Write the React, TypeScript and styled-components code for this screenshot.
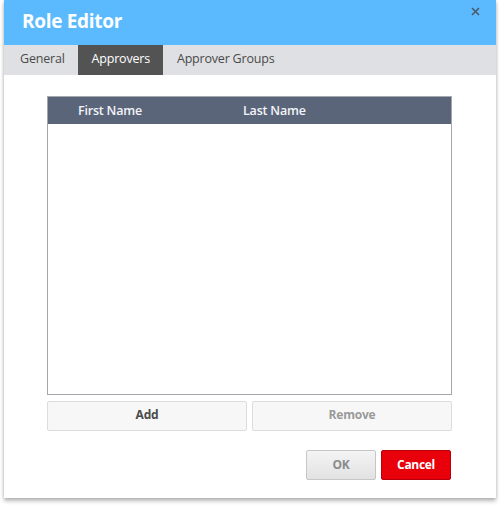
import React from "react";
import styled, { createGlobalStyle } from "styled-components";

const Global = createGlobalStyle`
  html, body { margin: 0; padding: 0; background: #ffffff; }
  body { font-family: "Open Sans", "Noto Sans", sans-serif; }
`;

const Page = styled.div`
  padding: 0 4px 8px;
  min-height: 506px;
  box-sizing: border-box;
`;

const Dialog = styled.div`
  position: relative;
  width: 492px;
  height: 498px;
  background: #ffffff;
  box-shadow: 0 3px 4px rgba(0, 0, 0, 0.28), 0 0 3px rgba(0, 0, 0, 0.12);
  display: flex;
  flex-direction: column;
`;

const Header = styled.div`
  height: 45px;
  background: #5bbafe;
  display: flex;
  align-items: center;
  padding: 0 0 4px 18px;
  box-sizing: border-box;
`;

const Title = styled.h1`
  margin: 0;
  font-size: 19px;
  font-weight: 700;
  color: #ffffff;
  letter-spacing: -0.3px;
`;

const Close = styled.button`
  position: absolute;
  top: 4px;
  right: 14px;
  width: 14px;
  height: 14px;
  padding: 0;
  border: none;
  background: transparent;
  display: flex;
  align-items: center;
  justify-content: center;
`;

const TabBar = styled.div`
  height: 30px;
  background: #dfe0e3;
  display: flex;
  padding-left: 2px;
`;

const Tab = styled.div<{ $active?: boolean }>`
  padding: 0 13px 4px 14px;
  display: flex;
  align-items: center;
  font-size: 12.5px;
  letter-spacing: -0.2px;
  color: ${(p) => (p.$active ? "#ffffff" : "#4a4a4a")};
  background: ${(p) => (p.$active ? "#535353" : "transparent")};
`;

const Body = styled.div`
  flex: 1;
  padding: 21px 44px 0 43px;
  display: flex;
  flex-direction: column;
`;

const Grid = styled.div`
  height: 299px;
  border: 1px solid #a4a7ab;
  box-sizing: border-box;
  display: flex;
  flex-direction: column;
`;

const GridHead = styled.div`
  height: 27px;
  background: #5a6579;
  display: grid;
  grid-template-columns: 165px 1fr;
  align-items: center;
  padding-left: 30px;
`;

const HeadCell = styled.div`
  font-size: 12.5px;
  font-weight: 600;
  color: #f2f4f8;
  letter-spacing: -0.2px;
`;

const ActionRow = styled.div`
  margin-top: 6px;
  display: grid;
  grid-template-columns: 1fr 1fr;
  gap: 5px;
`;

const ActionButton = styled.button<{ $disabled?: boolean }>`
  height: 30px;
  padding: 0 0 3px;
  border: 1px solid #dcdcdc;
  border-radius: 2px;
  background: #f7f7f7;
  font-family: inherit;
  font-size: 12px;
  font-weight: 700;
  letter-spacing: -0.2px;
  color: ${(p) => (p.$disabled ? "#9a9a9a" : "#4a4a4a")};
`;

const Footer = styled.div`
  margin-top: 19px;
  display: flex;
  justify-content: flex-end;
  gap: 5px;
  padding-right: 1px;
`;

const DialogButton = styled.button<{ $primary?: boolean }>`
  width: 70px;
  height: 30px;
  padding: 0 0 2px;
  border-radius: 2px;
  font-family: inherit;
  font-size: 12px;
  font-weight: 700;
  letter-spacing: -0.3px;
  border: 1px solid ${(p) => (p.$primary ? "#b8000a" : "#c6c6c6")};
  background: ${(p) =>
    p.$primary ? "#e8000b" : "linear-gradient(#f4f4f4, #e2e2e2)"};
  color: ${(p) => (p.$primary ? "#ffffff" : "#8a8a8a")};
`;

export default function App() {
  return (
    <>
      <Global />
      <Page>
        <Dialog>
          <Header>
            <Title>Role Editor</Title>
          </Header>
          <Close aria-label="Close">
            <svg width="9" height="9" viewBox="0 0 9 9">
              <path d="M1 1 L8 8 M8 1 L1 8" stroke="#4b5a6a" strokeWidth="1.6" />
            </svg>
          </Close>
          <TabBar>
            <Tab>General</Tab>
            <Tab $active>Approvers</Tab>
            <Tab>Approver Groups</Tab>
          </TabBar>
          <Body>
            <Grid>
              <GridHead>
                <HeadCell>First Name</HeadCell>
                <HeadCell>Last Name</HeadCell>
              </GridHead>
            </Grid>
            <ActionRow>
              <ActionButton>Add</ActionButton>
              <ActionButton $disabled>Remove</ActionButton>
            </ActionRow>
            <Footer>
              <DialogButton>OK</DialogButton>
              <DialogButton $primary>Cancel</DialogButton>
            </Footer>
          </Body>
        </Dialog>
      </Page>
    </>
  );
}
